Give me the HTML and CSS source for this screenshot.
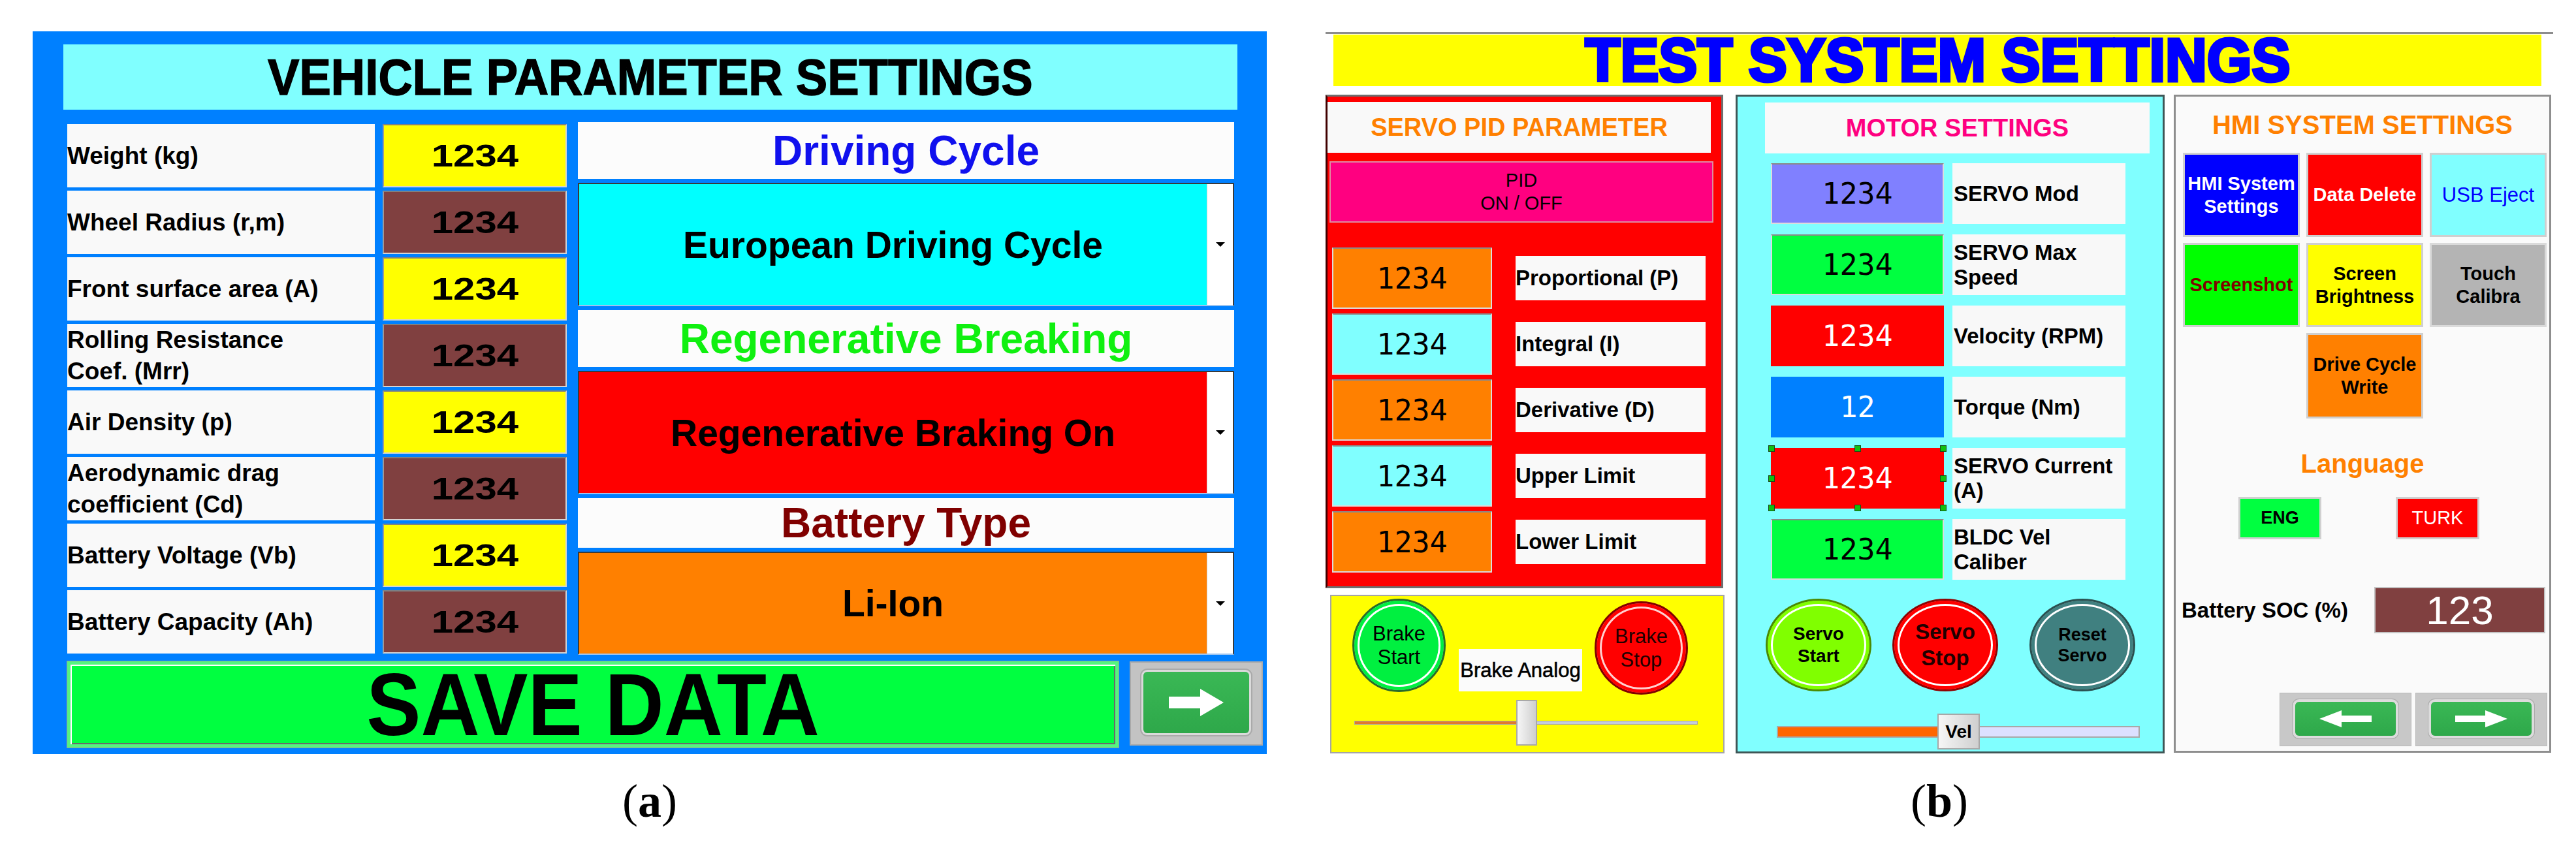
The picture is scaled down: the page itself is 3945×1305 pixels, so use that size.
FILE: index.html
```html
<!DOCTYPE html>
<html>
<head>
	<meta charset="utf-8">
	<title>Vehicle Parameter / Test System Settings</title>
	<link rel="stylesheet" href="styles.css">
</head>
<body>
<div class="figure">

	<section class="fig fig-a">
		<div class="screen-a">
			<div class="title-a"><span class="squeeze-a">VEHICLE PARAMETER SETTINGS</span></div>

			<div class="params">
				<div class="param-table">
					<div class="param-label">Weight (kg)</div>
					<div class="param-value yellow"><span>1234</span></div>
					<div class="param-label">Wheel Radius (r,m)</div>
					<div class="param-value brown"><span>1234</span></div>
					<div class="param-label">Front surface area (A)</div>
					<div class="param-value yellow"><span>1234</span></div>
					<div class="param-label">Rolling Resistance<br>Coef. (Mrr)</div>
					<div class="param-value brown"><span>1234</span></div>
					<div class="param-label">Air Density (p)</div>
					<div class="param-value yellow"><span>1234</span></div>
					<div class="param-label">Aerodynamic drag<br>coefficient (Cd)</div>
					<div class="param-value brown"><span>1234</span></div>
					<div class="param-label">Battery Voltage (Vb)</div>
					<div class="param-value yellow"><span>1234</span></div>
					<div class="param-label">Battery Capacity (Ah)</div>
					<div class="param-value brown"><span>1234</span></div>
				</div>

				<div class="choices">
					<div class="choice-title cycle-title">Driving Cycle</div>
					<div class="dropdown dd-cyan">
						<span class="dropdown-text">European Driving Cycle</span>
						<span class="dropdown-arrow"></span>
					</div>
					<div class="choice-title regen-title">Regenerative Breaking</div>
					<div class="dropdown dd-red">
						<span class="dropdown-text">Regenerative Braking On</span>
						<span class="dropdown-arrow"></span>
					</div>
					<div class="choice-title battery-title short">Battery Type</div>
					<div class="dropdown dd-orange short">
						<span class="dropdown-text">Li-Ion</span>
						<span class="dropdown-arrow"></span>
					</div>
				</div>
			</div>

			<div class="actions-a">
				<div class="save-btn"><span class="squeeze-save">SAVE DATA</span></div>
				<div class="arrow-btn">
					<div class="arrow-face">
						<svg width="84" height="42" viewBox="0 0 84 42"><polygon points="0,12 48,12 48,0 84,21 48,42 48,30 0,30" fill="#fff"/></svg>
					</div>
				</div>
			</div>
		</div>
		<div class="caption">(<b>a</b>)</div>
	</section>

	<section class="fig fig-b">
		<div class="screen-b">
			<div class="title-b"><span class="squeeze-b">TEST SYSTEM SETTINGS</span></div>

			<div class="columns-b">
				<div class="col-servo">
					<div class="pid-panel">
						<div class="panel-head pid-head">SERVO PID PARAMETER</div>
						<div class="pid-toggle">PID<br>ON / OFF</div>
						<div class="pid-rows">
							<div class="mono-value orange">1234</div>
							<div class="side-label">Proportional (P)</div>
							<div class="mono-value cyan">1234</div>
							<div class="side-label">Integral (I)</div>
							<div class="mono-value orange">1234</div>
							<div class="side-label">Derivative (D)</div>
							<div class="mono-value cyan">1234</div>
							<div class="side-label">Upper Limit</div>
							<div class="mono-value orange">1234</div>
							<div class="side-label">Lower Limit</div>
						</div>
					</div>

					<div class="brake-panel">
						<div class="brake-top">
							<div class="round-btn brake-start">Brake<br>Start</div>
							<div class="brake-label">Brake Analog</div>
							<div class="round-btn brake-stop">Brake<br>Stop</div>
						</div>
						<div class="slider brake-slider">
							<div class="slider-track"></div>
							<div class="slider-thumb"></div>
						</div>
					</div>
				</div>

				<div class="motor-panel">
					<div class="panel-head motor-head">MOTOR SETTINGS</div>
					<div class="motor-rows">
						<div class="mono-value periwinkle">1234</div>
						<div class="motor-label">SERVO Mod</div>
						<div class="mono-value green">1234</div>
						<div class="motor-label">SERVO Max<br>Speed</div>
						<div class="mono-value red light-text">1234</div>
						<div class="motor-label">Velocity (RPM)</div>
						<div class="mono-value blue light-text">12</div>
						<div class="motor-label">Torque (Nm)</div>
						<div class="mono-value red light-text selected">1234
							<span class="handle h-tl"></span><span class="handle h-tc"></span><span class="handle h-tr"></span>
							<span class="handle h-ml"></span><span class="handle h-mr"></span>
							<span class="handle h-bl"></span><span class="handle h-bc"></span><span class="handle h-br"></span>
						</div>
						<div class="motor-label">SERVO Current<br>(A)</div>
						<div class="mono-value green">1234</div>
						<div class="motor-label">BLDC Vel<br>Caliber</div>
					</div>

					<div class="round-row">
						<div class="round-btn oval servo-start">Servo<br>Start</div>
						<div class="round-btn oval servo-stop">Servo<br>Stop</div>
						<div class="round-btn oval servo-reset">Reset<br>Servo</div>
					</div>

					<div class="slider vel-slider">
						<div class="slider-track"></div>
						<div class="slider-thumb">Vel</div>
					</div>
				</div>

				<div class="hmi-panel">
					<div class="hmi-head">HMI SYSTEM SETTINGS</div>
					<div class="hmi-grid">
						<div class="hmi-btn btn-blue">HMI System<br>Settings</div>
						<div class="hmi-btn btn-red">Data Delete</div>
						<div class="hmi-btn btn-cyan">USB Eject</div>
						<div class="hmi-btn btn-green">Screenshot</div>
						<div class="hmi-btn btn-yellow">Screen<br>Brightness</div>
						<div class="hmi-btn btn-gray">Touch<br>Calibra</div>
						<div class="hmi-btn btn-orange drive-write">Drive Cycle<br>Write</div>
					</div>

					<div class="hmi-head lang-title">Language</div>
					<div class="lang-row">
						<div class="lang-btn lang-eng">ENG</div>
						<div class="lang-btn lang-turk">TURK</div>
					</div>

					<div class="soc-row">
						<div class="soc-label">Battery SOC (%)</div>
						<div class="soc-value">123</div>
					</div>

					<div class="nav-row">
						<div class="nav-btn">
							<div class="nav-face">
								<svg width="80" height="26" viewBox="0 0 80 26"><polygon points="80,8 34,8 34,0 0,13 34,26 34,18 80,18" fill="#fff"/></svg>
							</div>
						</div>
						<div class="nav-btn">
							<div class="nav-face">
								<svg width="80" height="26" viewBox="0 0 80 26"><polygon points="0,8 46,8 46,0 80,13 46,26 46,18 0,18" fill="#fff"/></svg>
							</div>
						</div>
					</div>
				</div>
			</div>
		</div>
		<div class="caption">(<b>b</b>)</div>
	</section>

</div>
</body>
</html>
```

FILE: styles.css
```css
* {
	box-sizing: border-box;
}
body {
	margin: 0;
	background-color: #fff;
	font-family: "Liberation Sans", Arial, sans-serif;
	color: #000;
}
.figure {
	display: flex;
	width: 3945px;
	height: 1305px;
	padding: 48px 0 0 50px;
}
.fig {
	display: flex;
	flex-direction: column;
	align-items: center;
}
.fig-a {
	width: 1890px;
}
.fig-b {
	width: 1880px;
	margin: 1px 0 0 90px;
}
.caption {
	font-family: "Liberation Serif", "Times New Roman", serif;
	font-size: 72px;
	line-height: 80px;
	margin-top: 32px;
}

/* ---------- (a) vehicle parameters ---------- */
.screen-a {
	width: 1890px;
	height: 1107px;
	background-color: #0080ff;
	padding-top: 20px;
}
.title-a {
	margin-left: 47px;
	width: 1798px;
	height: 100px;
	background-color: #80ffff;
	display: flex;
	align-items: center;
	justify-content: center;
	font-weight: bold;
	font-size: 78px;
	line-height: 1;
	-webkit-text-stroke: 1.5px #000;
}
.squeeze-a {
	display: inline-block;
	transform: scaleX(0.93);
}
.params {
	display: flex;
	margin: 19px 0 0 53px;
}
.param-table {
	display: grid;
	grid-template-columns: 471px 282px;
	grid-auto-rows: 97px;
	column-gap: 12px;
	row-gap: 5px;
	margin-top: 3px;
}
.param-label {
	background-color: #f9f9f9;
	display: flex;
	align-items: center;
	font-weight: bold;
	font-size: 37px;
	line-height: 48px;
}
.param-value {
	display: flex;
	align-items: center;
	justify-content: center;
	border: 2px solid #d4d4d4;
	border-top-color: #808080;
	border-left-color: #9a9a9a;
	font-weight: bold;
	font-size: 48px;
}
.param-value span {
	display: inline-block;
	transform: scaleX(1.25);
}
.yellow {
	background-color: #ffff00;
}
.brown {
	background-color: #804040;
}
.choices {
	margin-left: 17px;
	width: 1005px;
	display: flex;
	flex-direction: column;
	gap: 6px;
}
.choice-title {
	height: 87px;
	background-color: #fcfcfc;
	display: flex;
	align-items: center;
	justify-content: center;
	font-weight: bold;
	font-size: 64px;
	line-height: 1;
}
.choice-title.short {
	height: 76px;
}
.cycle-title {
	color: #1010ee;
}
.regen-title {
	color: #10f010;
}
.battery-title {
	color: #800000;
}
.dropdown {
	height: 189px;
	display: flex;
	border: 2px solid #3a3a3a;
	border-bottom-color: #9cc4f0;
}
.dropdown.short {
	height: 158px;
}
.dd-cyan {
	background-color: #00ffff;
}
.dd-red {
	background-color: #ff0000;
}
.dd-orange {
	background-color: #ff8000;
}
.dropdown-text {
	flex: 1;
	display: flex;
	align-items: center;
	justify-content: center;
	font-weight: bold;
	font-size: 57px;
}
.dropdown-arrow {
	width: 40px;
	background-color: #fff;
	border-left: 1px solid #cfcfcf;
	display: flex;
	align-items: center;
	justify-content: center;
}
.dropdown-arrow::after {
	content: "";
	border-left: 7px solid transparent;
	border-right: 7px solid transparent;
	border-top: 7px solid #000;
}
.actions-a {
	display: flex;
	margin: 10px 0 0 53px;
}
.save-btn {
	width: 1610px;
	height: 132px;
	display: flex;
	align-items: center;
	justify-content: center;
	background-color: #00ff40;
	border: 5px solid #55f47f;
	box-shadow: 0 0 0 1px #9a9a9a, inset 2px 2px 0 #fff, inset -2px -2px 0 #6a6a6a;
	font-weight: bold;
	font-size: 135px;
	line-height: 1;
}
.squeeze-save {
	display: inline-block;
	transform: scaleX(0.925);
}
.arrow-btn {
	margin-left: 17px;
	width: 204px;
	height: 129px;
	background-color: #c3c3c3;
	border: 2px solid #a9a9a9;
	padding: 14px 19px 17px;
}
.arrow-face {
	height: 100%;
	border-radius: 6px;
	background: linear-gradient(#3ab855, #2ea84a);
	box-shadow: 0 0 0 3px #dadada, 0 0 0 5px #aaa;
	display: flex;
	align-items: center;
	justify-content: center;
}

/* ---------- (b) test system ---------- */
.screen-b {
	width: 1880px;
	height: 1106px;
	border-top: 3px solid #8d8d8d;
}
.title-b {
	margin: 1px 0 0 12px;
	width: 1850px;
	height: 79px;
	background-color: #ffff00;
	color: #0000ff;
	display: flex;
	align-items: center;
	justify-content: center;
	font-weight: bold;
	font-size: 93px;
	line-height: 1;
	-webkit-text-stroke: 5px #0000ff;
}
.squeeze-b {
	display: inline-block;
	transform: scaleX(0.95);
}
.columns-b {
	display: flex;
	align-items: flex-start;
	margin-top: 13px;
}
.panel-head {
	height: 78px;
	background-color: #f9f9f9;
	display: flex;
	align-items: center;
	justify-content: center;
	font-weight: bold;
	font-size: 38px;
}
.col-servo {
	width: 611px;
}
.pid-panel {
	width: 609px;
	height: 756px;
	background-color: #ff0000;
	border: 3px solid #6e6e6e;
	border-left-color: #400000;
	padding-top: 8px;
}
.pid-head {
	width: 587px;
	color: #ff8000;
}
.pid-toggle {
	margin: 13px 0 0 3px;
	width: 588px;
	height: 94px;
	background-color: #ff0080;
	border: 2px solid #e08aa0;
	display: flex;
	align-items: center;
	justify-content: center;
	text-align: center;
	font-size: 29px;
	line-height: 35px;
}
.pid-rows {
	display: grid;
	grid-template-columns: 245px 291px;
	grid-auto-rows: 94px;
	column-gap: 36px;
	row-gap: 7px;
	margin: 38px 0 0 7px;
}
.mono-value {
	display: flex;
	align-items: center;
	justify-content: center;
	font-family: "DejaVu Sans Mono", "Liberation Mono", monospace;
	font-size: 45px;
	border: 2px solid #dcdcdc;
	border-top-color: #8a8a8a;
}
.orange {
	background-color: #ff8000;
}
.cyan {
	background-color: #80ffff;
}
.periwinkle {
	background-color: #8080ff;
}
.green {
	background-color: #00ff40;
}
.red {
	background-color: #ff0000;
	border-color: #ff0000;
}
.blue {
	background-color: #0080ff;
	border-color: #0080ff;
}
.light-text {
	color: #fff;
}
.side-label {
	align-self: center;
	height: 68px;
	background-color: #f9f9f9;
	display: flex;
	align-items: center;
	font-weight: bold;
	font-size: 33px;
}
.brake-panel {
	margin: 10px 0 0 7px;
	width: 604px;
	height: 243px;
	background-color: #ffff00;
	border: 2px solid #a5a5a5;
}
.brake-top {
	display: flex;
	align-items: flex-start;
	padding: 4px 0 0 32px;
}
.round-btn {
	flex: none;
	width: 143px;
	height: 143px;
	border-radius: 50%;
	border: 3px solid #333;
	display: flex;
	align-items: center;
	justify-content: center;
	text-align: center;
	font-weight: bold;
	font-size: 28px;
	line-height: 34px;
}
.brake-start {
	background-color: #00f040;
	border-color: #2a6a2a;
	font-weight: normal;
	font-size: 31px;
	line-height: 36px;
	box-shadow: inset 0 0 0 5px #00f040, inset 0 0 0 8px #fff;
}
.brake-label {
	margin: 77px 0 0 20px;
	width: 189px;
	height: 65px;
	background-color: #fbfbfb;
	display: flex;
	align-items: center;
	justify-content: center;
	font-size: 31px;
	-webkit-text-stroke: 0.6px #000;
}
.brake-stop {
	margin: 4px 0 0 19px;
	background-color: #ff0000;
	border-color: #800000;
	color: #200000;
	font-weight: normal;
	font-size: 31px;
	line-height: 36px;
	box-shadow: inset 0 0 0 5px #ff0000, inset 0 0 0 8px #ffd0d0;
}
.slider {
	position: relative;
}
.slider-track {
	border: 1px solid #a8a8a8;
}
.slider-thumb {
	position: absolute;
	top: 0;
	background: linear-gradient(to right, #f6f6f6, #cfcfcf);
	border: 2px solid #a8a8a8;
	display: flex;
	align-items: center;
	justify-content: center;
	font-weight: bold;
	font-size: 28px;
}
.brake-slider {
	margin: 8px 0 0 35px;
	width: 526px;
	height: 70px;
	padding-top: 32px;
}
.brake-slider .slider-track {
	height: 6px;
	background: linear-gradient(to right, #e07a30 0 247px, #c4cce0 247px);
}
.brake-slider .slider-thumb {
	left: 248px;
	width: 32px;
	height: 70px;
}
.motor-panel {
	margin-left: 17px;
	width: 657px;
	height: 1009px;
	background-color: #80ffff;
	border: 3px solid #3f5656;
}
.motor-head {
	margin: 9px 0 0 42px;
	width: 589px;
	color: #ff0080;
}
.motor-rows {
	display: grid;
	grid-template-columns: 265px 265px;
	grid-auto-rows: 93px;
	column-gap: 13px;
	row-gap: 16px;
	margin: 15px 0 0 51px;
}
.motor-label {
	background-color: #f8f8f8;
	display: flex;
	align-items: center;
	padding-left: 2px;
	font-weight: bold;
	font-size: 33px;
	line-height: 38px;
}
.selected {
	position: relative;
}
.handle {
	position: absolute;
	width: 10px;
	height: 10px;
	background-color: #10c010;
	border: 1px solid #1a4a1a;
}
.h-tl { left: -6px; top: -6px; }
.h-tc { left: calc(50% - 5px); top: -6px; }
.h-tr { right: -6px; top: -6px; }
.h-ml { left: -6px; top: calc(50% - 5px); }
.h-mr { right: -6px; top: calc(50% - 5px); }
.h-bl { left: -6px; bottom: -6px; }
.h-bc { left: calc(50% - 5px); bottom: -6px; }
.h-br { right: -6px; bottom: -6px; }
.round-row {
	display: flex;
	margin-top: 29px;
	padding-left: 43px;
}
.round-btn.oval {
	width: 162px;
	height: 142px;
}
.servo-start {
	background-color: #80ff00;
	border-color: #4a8a00;
	box-shadow: inset 0 0 0 5px #80ff00, inset 0 0 0 8px #fff;
}
.servo-stop {
	margin-left: 32px;
	background-color: #ff0000;
	border-color: #900000;
	font-size: 33px;
	line-height: 40px;
	color: #200000;
	box-shadow: inset 0 0 0 5px #ff0000, inset 0 0 0 8px #fff;
}
.servo-reset {
	margin-left: 48px;
	background-color: #408080;
	border-color: #2a5050;
	font-size: 27px;
	line-height: 32px;
	box-shadow: inset 0 0 0 5px #408080, inset 0 0 0 8px #fff;
}
.vel-slider {
	margin: 34px 0 0 60px;
	width: 556px;
	height: 55px;
	padding-top: 19px;
}
.vel-slider .slider-track {
	height: 18px;
	border-width: 2px;
	background: linear-gradient(to right, #ff6600 0 244px, #dce0ff 244px);
}
.vel-slider .slider-thumb {
	left: 246px;
	width: 65px;
	height: 55px;
}
.hmi-panel {
	margin-left: 14px;
	width: 578px;
	height: 1008px;
	background-color: #fafafa;
	border: 3px solid #8e8e8e;
}
.hmi-head {
	margin-top: 17px;
	height: 52px;
	display: flex;
	align-items: center;
	justify-content: center;
	font-weight: bold;
	font-size: 40px;
	color: #ff8000;
}
.hmi-grid {
	display: grid;
	grid-template-columns: 179px 179px 179px;
	grid-template-rows: 129px 129px 131px;
	column-gap: 10px;
	row-gap: 9px;
	margin: 17px 0 0 11px;
}
.hmi-btn {
	display: flex;
	align-items: center;
	justify-content: center;
	text-align: center;
	border: 3px solid #cfcfcf;
	font-weight: bold;
	font-size: 29px;
	line-height: 35px;
}
.btn-blue {
	background-color: #0000ff;
	color: #fff;
}
.btn-red {
	background-color: #ff0000;
	color: #fff;
}
.btn-cyan {
	background-color: #80ffff;
	color: #0000ff;
	font-weight: normal;
	font-size: 31px;
}
.btn-green {
	background-color: #00ff00;
	color: #800000;
}
.btn-yellow {
	background-color: #ffff00;
}
.btn-gray {
	background-color: #b4b4b4;
	border-color: #dadada;
}
.btn-orange {
	background-color: #ff8000;
}
.drive-write {
	grid-column: 2;
}
.lang-title {
	margin-top: 47px;
	height: 44px;
}
.lang-row {
	display: flex;
	margin-top: 29px;
	padding-left: 96px;
}
.lang-btn {
	height: 65px;
	display: flex;
	align-items: center;
	justify-content: center;
	border: 3px solid #d0d0d0;
	font-size: 29px;
}
.lang-eng {
	width: 127px;
	background-color: #00ff40;
	font-weight: bold;
	font-size: 27px;
}
.lang-turk {
	margin-left: 114px;
	width: 128px;
	background-color: #ff0000;
	color: #fff;
}
.soc-row {
	display: flex;
	align-items: center;
	justify-content: space-between;
	margin-top: 73px;
	padding: 0 6px 0 9px;
}
.soc-label {
	font-weight: bold;
	font-size: 33px;
}
.soc-value {
	width: 262px;
	height: 71px;
	background-color: #804040;
	border: 2px solid #c4c4c4;
	display: flex;
	align-items: center;
	justify-content: center;
	color: #fff;
	font-size: 62px;
}
.nav-row {
	display: flex;
	gap: 6px;
	margin-top: 91px;
	padding-left: 159px;
}
.nav-btn {
	width: 202px;
	height: 82px;
	background-color: #c8c8c8;
	border: 1px solid #b8b8b8;
	padding: 13px 23px 15px;
}
.nav-face {
	height: 100%;
	border-radius: 6px;
	background: linear-gradient(#3ab855, #2ea84a);
	box-shadow: 0 0 0 4px #dcdcdc, 0 0 0 5px #aaa;
	display: flex;
	align-items: center;
	justify-content: center;
}
```
